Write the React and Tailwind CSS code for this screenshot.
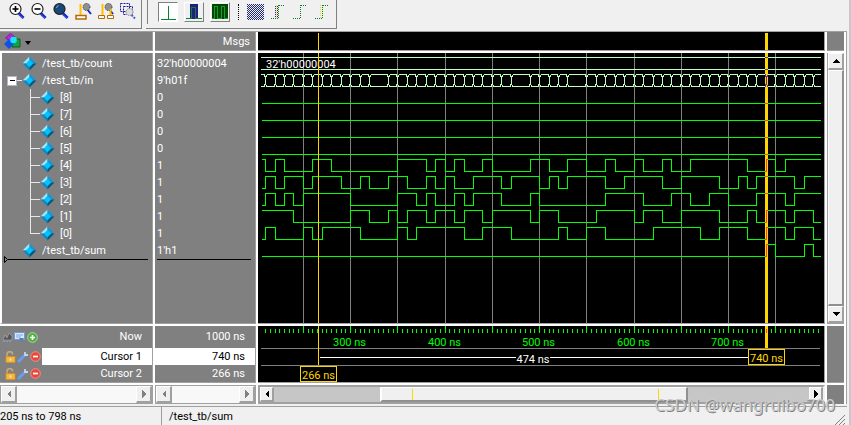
const BITS = [
  { name: '[8]', value: '0', start: 0, edges: [] },
  { name: '[7]', value: '0', start: 0, edges: [] },
  { name: '[6]', value: '0', start: 0, edges: [] },
  { name: '[5]', value: '0', start: 0, edges: [] },
  {
    name: '[4]', value: '1', start: 1,
    edges: [210, 220, 230, 260, 280, 350, 380, 390, 400, 410, 420, 440, 450, 490, 510, 530, 550, 570, 580, 600, 610, 630, 640, 660, 720, 740, 750, 760],
  },
  {
    name: '[3]', value: '1', start: 0,
    edges: [210, 220, 230, 250, 260, 290, 310, 320, 340, 360, 380, 390, 400, 410, 430, 460, 470, 500, 510, 520, 530, 570, 590, 630, 650, 690, 710, 720, 730, 770, 780],
  },
  {
    name: '[2]', value: '1', start: 0,
    edges: [210, 220, 230, 240, 250, 300, 350, 370, 380, 390, 410, 420, 430, 460, 490, 500, 570, 610, 640, 660, 680, 700, 730, 760, 770],
  },
  {
    name: '[1]', value: '1', start: 1,
    edges: [240, 300, 320, 340, 350, 360, 380, 390, 410, 420, 440, 450, 490, 500, 520, 560, 600, 610, 630, 650, 690, 720, 730, 740, 760, 770, 790],
  },
  {
    name: '[0]', value: '1', start: 0,
    edges: [210, 220, 250, 260, 270, 310, 350, 360, 370, 420, 440, 470, 520, 530, 550, 570, 620, 670, 690, 720, 740, 760, 770, 790],
  },
]
const SUM = { name: '/test_tb/sum', value: "1'h1", start: 0, edges: [740, 750, 780, 790] }

const VALUES = ["32'h00000004", "9'h01f", ...BITS.map((b) => b.value), SUM.value]
const BUS_EDGES = [...new Set(BITS.flatMap((b) => b.edges))].sort((a, b) => a - b)

const SCROLL_SPAN = 1031
const WAVE_LEFT = 4
const WAVE_RIGHT = 563

// time (ns) -> x in the wave pane
const xAt = (t) => Math.floor(92.6 + (t - 300) * 0.945) + 0.5
// y of the low level of a row
const lowAt = (row) => 16.5 + row * 17

const range = (from, to, step) => {
  const out = []
  for (let t = from; t <= to; t += step) out.push(t)
  return out
}

function bitPath({ start, edges }, row) {
  let level = start
  const y = (l) => lowAt(row) - l * 12
  let d = `M${WAVE_LEFT} ${y(level)}`
  edges.forEach((t) => {
    d += `H${xAt(t)}`
    level = 1 - level
    d += `V${y(level)}`
  })
  return d + `H${WAVE_RIGHT}`
}

function busPath(row) {
  const lo = lowAt(row)
  const hi = lo - 12
  let d = ''
  let x = WAVE_LEFT - 1
  BUS_EDGES.forEach((t) => {
    const c = xAt(t)
    // both rails stop short of the edge, then pinch together
    d += `M${x} ${hi}H${c - 1}V${hi + 2}H${c}M${x} ${lo}H${c - 1}V${lo - 2}H${c}`
    d += `M${c} ${hi + 2}V${lo - 2}M${c + 1} ${hi}V${hi + 2}M${c + 1} ${lo}V${lo - 2}`
    x = c + 1
  })
  return d + `M${x} ${hi}H${WAVE_RIGHT}M${x} ${lo}H${WAVE_RIGHT}`
}

/* ---------- icons ---------- */

function Magnifier({ fill, sign }) {
  return (
    <svg width="16" height="18" viewBox="0 0 16 18" aria-hidden="true">
      <path d="M9.500 11l5 5" stroke="#1028c8" strokeWidth="3" />
      <path d="M10 12.500l4.500 4.500" stroke="#8aa0ff" strokeWidth="1" strokeDasharray="1 1" />
      <circle cx="6.500" cy="7" r="5.500" fill={fill} stroke="#202020" strokeWidth="1.200" />
      {sign !== 'full' && <path d="M3.500 7h6" stroke="#000" strokeWidth="1.600" />}
      {sign === 'in' && <path d="M6.500 4v6" stroke="#000" strokeWidth="1.600" />}
      {sign === 'full' && <path d="M3.500 6a3 3 0 0 1 2-2.500" stroke="#7fb0e0" fill="none" />}
    </svg>
  )
}

function ZoomCursor({ pair }) {
  return (
    <svg width="18" height="18" viewBox="0 0 18 18" aria-hidden="true">
      <path d="M12 7l4 5" stroke="#1028c8" strokeWidth="2" />
      <circle cx="11.500" cy="5" r="3.500" fill="#909090" stroke="#333" strokeDasharray="1 1" />
      <path d="M5.500 2v11" stroke="#ffc000" strokeWidth="2" />
      {pair ? (
        <>
          <path d="M13.500 7v6" stroke="#ffc000" strokeWidth="2" />
          <path d="M1.500 13.500h6v3h-6zM10.500 13.500h6v3h-6z" fill="#fff" stroke="#b86800" />
        </>
      ) : (
        <path d="M1 13.500h10v3.500H1z" fill="#fff" stroke="#b86800" strokeWidth="1.500" />
      )}
    </svg>
  )
}

function ZoomArea() {
  return (
    <svg width="18" height="18" viewBox="0 0 18 18" aria-hidden="true">
      <path d="M1.500 1.500h9v8h-9zM4.500 4.500h9v8h-9z" fill="none" stroke="#1818a0" strokeDasharray="2 1" />
      <circle cx="10.500" cy="10" r="3.500" fill="#ddd" stroke="#777" strokeDasharray="1 1" />
      <path d="M12.500 13l4 4" stroke="#4060d0" strokeWidth="2" strokeDasharray="2 1" />
    </svg>
  )
}

function EdgeIcon({ accent }) {
  return (
    <svg width="16" height="18" viewBox="0 0 16 18" aria-hidden="true">
      {accent === 'block' && <path d="M5 2h4v13H5z" fill="url(#hatch)" />}
      {accent && <path d="M6.500 2v13" stroke="#f0e000" strokeDasharray="1 1" />}
      <path d="M1 15.500h7M8.500 2v13M9 2.500h6" stroke="#008028" strokeDasharray="1 1" fill="none" />
    </svg>
  )
}

function Diamond() {
  return (
    <svg width="15" height="15" viewBox="0 0 15 15" className="shrink-0" aria-hidden="true">
      <path d="M7.500 0.500L0.500 7.500h7z" fill="#a6e4f8" />
      <path d="M7.500 0.500l7 7h-7z" fill="#1496d8" />
      <path d="M0.500 7.500l7 7v-7z" fill="#1286c4" />
      <path d="M14.500 7.500l-7 7v-7z" fill="#04587e" />
      <path d="M7.500 3.800l3.700 3.700-3.700 3.700-3.700-3.700z" fill="#00c4fa" />
    </svg>
  )
}

function Branch({ last }) {
  return (
    <svg width="10" height="17" viewBox="0 0 10 17" shapeRendering="crispEdges" className="shrink-0" aria-hidden="true">
      <path d={last ? 'M0.500 0V8.500H10' : 'M0.500 0V17M0.500 8.500H10'} stroke="#e8e8e8" fill="none" />
    </svg>
  )
}

function Shapes() {
  return (
    <svg width="17" height="16" viewBox="0 0 17 16" aria-hidden="true">
      <path d="M8 6h8v8H8z" fill="#18a040" stroke="#0a6020" />
      <path d="M6.500 0.500L11 4 6 8 1.500 5z" fill="#c020e0" stroke="#701090" strokeWidth=".7" />
      <path d="M5 6l5 5-5 5-5-5z" fill="#1050e8" />
      <circle cx="9.500" cy="7" r="3.300" fill="#10e8f8" />
    </svg>
  )
}

function Lock() {
  return (
    <svg width="11" height="12" viewBox="0 0 11 12" aria-hidden="true">
      <path d="M2 6V3.500a2.800 2.800 0 0 1 5.600 0" fill="none" stroke="#c8a878" strokeWidth="1.500" />
      <path d="M1 5.500h9v6H1z" fill="#f4b840" stroke="#d89020" strokeWidth=".8" />
      <path d="M5.500 7.500v2" stroke="#fff0b0" strokeWidth="1.500" />
    </svg>
  )
}

function Wrench() {
  return (
    <svg width="12" height="12" viewBox="0 0 12 12" aria-hidden="true">
      <path d="M2 10l5-5" stroke="#6a9cf0" strokeWidth="3" strokeLinecap="round" />
      <path d="M8 1v3h3" stroke="#c8d4e8" strokeWidth="1.800" fill="none" />
    </svg>
  )
}

function Badge({ plus }) {
  return (
    <svg width="11" height="11" viewBox="0 0 11 11" aria-hidden="true">
      <circle cx="5.500" cy="5.500" r="4.800" fill={plus ? '#4caf3c' : '#e8483c'} stroke={plus ? '#a8dca0' : '#f09088'} />
      <path d={plus ? 'M3 5.500h5M5.500 3v5' : 'M3 5.500h5'} stroke="#fff" strokeWidth="1.700" />
    </svg>
  )
}

function NowIcons() {
  return (
    <svg width="23" height="12" viewBox="0 0 23 12" aria-hidden="true">
      <path d="M1 9l2-5 2 3 2-5 3 3v4z" fill="#555" stroke="#aaa" strokeWidth=".7" />
      <path d="M1 10.500h9" stroke="#70a0e0" strokeDasharray="2 1" />
      <path d="M12.500 1.500h10v7h-10z" fill="#dce8fa" stroke="#6f98d8" />
      <path d="M14 4h7M14 6h5" stroke="#7aa0d8" />
      <path d="M17 7h5l-2.500 4z" fill="#4f7fd0" />
    </svg>
  )
}

const ARROWS = {
  left: 'M7 1v8L3 5z',
  right: 'M3 1v8l4-4z',
  up: 'M1 7h8L5 3z',
  down: 'M1 3h8L5 7z',
}

function ArrowButton({ dir, label, muted, className }) {
  return (
    <button
      type="button"
      aria-label={label}
      className={`flex shrink-0 items-center justify-center border-t border-l border-r-2 border-b-2 border-t-white border-l-white border-r-[#a0a0a0] border-b-[#a0a0a0] bg-[#f0f0f0] ${className}`}
    >
      <svg width="10" height="10" viewBox="0 0 10 10" shapeRendering="crispEdges" aria-hidden="true">
        <path d={ARROWS[dir]} fill={muted ? '#808080' : '#000'} />
      </svg>
    </button>
  )
}

/* ---------- toolbar ---------- */

function Toolbar() {
  return (
    <header className="flex h-[29px] shrink-0 gap-1">
      <div className="flex w-[142px] items-center border-r border-b border-[#808080] pb-1.5 pl-[9px]">
        <button type="button" aria-label="Zoom in" className="w-[22px]"><Magnifier fill="#fff" sign="in" /></button>
        <button type="button" aria-label="Zoom out" className="w-[22px]"><Magnifier fill="#fff" sign="out" /></button>
        <button type="button" aria-label="Zoom full" className="w-[22px]"><Magnifier fill="#184878" sign="full" /></button>
        <button type="button" aria-label="Zoom on cursor" className="w-[22px]"><ZoomCursor /></button>
        <button type="button" aria-label="Zoom between cursors" className="w-[22px]"><ZoomCursor pair /></button>
        <button type="button" aria-label="Zoom area" className="w-[22px]"><ZoomArea /></button>
      </div>
      <div className="flex w-[191px] items-center border-r border-b border-[#808080] pb-1 pl-px">
        <span className="mr-2.5 h-full w-px bg-[#808080]" />
        <button type="button" aria-label="Cursor mode" className="mr-1.5 size-5 border border-t-[#808080] border-l-[#808080] border-white bg-white">
          <svg width="18" height="18" viewBox="0 0 18 18" shapeRendering="crispEdges"><path d="M2 16.500h15M9.500 3v13" stroke="#108030" /></svg>
        </button>
        <button type="button" aria-label="Edit mode" className="mr-1.5 size-5 border border-white border-r-[#808080] border-b-[#808080]">
          <svg width="18" height="18" viewBox="0 0 18 18" shapeRendering="crispEdges"><path d="M5 1h8v15H5z" fill="#202080" /><path d="M1 15.500h5.500V4.500h4v11H17" stroke="#108030" fill="none" /></svg>
        </button>
        <button type="button" aria-label="Stimulus mode" className="mr-2 size-5 border border-white border-r-[#808080] border-b-[#808080]">
          <svg width="18" height="18" viewBox="0 0 18 18" shapeRendering="crispEdges"><path d="M1 1h16v15H1z" fill="#004800" /><path d="M1 15.500h2.500v-12h3v12h4v-12h3v12H17" stroke="#10a030" fill="none" /></svg>
        </button>
        <span className="mr-2 h-4 border-l border-dotted border-black" />
        <button type="button" aria-label="Expand" className="mr-1.5">
          <svg width="17" height="16" viewBox="0 0 17 16" shapeRendering="crispEdges">
            <defs>
              <pattern id="hatch" width="2" height="2" patternUnits="userSpaceOnUse">
                <path d="M0 0h1v1H0zM1 1h1v1H1z" fill="#20287c" />
              </pattern>
            </defs>
            <path d="M0 0h17v16H0z" fill="url(#hatch)" />
          </svg>
        </button>
        <button type="button" aria-label="Edge block" className="mr-1.5"><EdgeIcon accent="block" /></button>
        <button type="button" aria-label="Edge" className="mr-1.5"><EdgeIcon /></button>
        <button type="button" aria-label="Edge line"><EdgeIcon accent="line" /></button>
      </div>
    </header>
  )
}

/* ---------- panes ---------- */

const HEAD = 'h-[19px] shrink-0 border-b border-[#a0a0a0]'
const FOOT = 'h-[57px] shrink-0 border-b border-[#a0a0a0]'

function HScroll({ name }) {
  return (
    <div className="flex h-[19px] shrink-0 border border-[#a0a0a0] bg-[#f8f8f8]">
      <ArrowButton dir="left" label={`Scroll ${name} left`} muted className="w-4" />
      <div className="flex-1" />
      <ArrowButton dir="right" label={`Scroll ${name} right`} muted className="w-4" />
    </div>
  )
}

function CursorRow({ label, active }) {
  return (
    <div className="flex h-[17px] items-center">
      <div className="flex w-[42px] items-center gap-px pl-[5px]">
        <Lock />
        <Wrench />
        <Badge />
      </div>
      <span className={`flex h-full flex-1 items-center justify-end pr-2.5 ${active ? 'bg-white text-black' : ''}`}>{label}</span>
    </div>
  )
}

function NamesPane() {
  return (
    <section className="flex w-[153px] shrink-0 flex-col gap-0.5 text-white">
      <div className={`${HEAD} flex items-center gap-1 border-r bg-[#808080] pl-1`}>
        <Shapes />
        <svg width="6" height="4" viewBox="0 0 6 4" className="mt-1" aria-hidden="true"><path d="M0 0h6L3 4z" fill="#000" /></svg>
      </div>
      <div className="flex-1 border-r border-b border-l-2 border-[#a0a0a0] border-l-white bg-[#808080] pt-0.5">
        <ul>
          <li className="flex h-[17px] items-center pl-5">
            <Diamond />
            <span className="pl-[5px]">/test_tb/count</span>
          </li>
          <li>
            <div className="flex h-[17px] items-center pl-[5px]">
              <button type="button" aria-label="Collapse /test_tb/in" className="size-2.5 border border-[#b0b8c8] bg-white">
                <svg width="8" height="8" viewBox="0 0 8 8" shapeRendering="crispEdges" className="block"><path d="M2 3.500h5" stroke="#000" /></svg>
              </button>
              <span className="h-px w-[5px] bg-[#e8e8e8]" />
              <Diamond />
              <span className="pl-[5px]">/test_tb/in</span>
            </div>
            <ul>
              {BITS.map((bit, i) => (
                <li key={bit.name} className="flex h-[17px] items-center pl-7">
                  <Branch last={i === BITS.length - 1} />
                  <Diamond />
                  <span className="pl-[5px]">{bit.name}</span>
                </li>
              ))}
            </ul>
          </li>
          <li className="flex h-[17px] items-center pl-5">
            <Diamond />
            <span className="pl-[5px]">{SUM.name}</span>
          </li>
        </ul>
        {/* insertion bar */}
        <div className="flex h-px items-center pr-1 pl-0.5">
          <svg width="4" height="7" viewBox="0 0 4 7" aria-hidden="true"><path d="M.5 .5v6l3-3z" fill="none" stroke="#000" /></svg>
          <span className="h-px flex-1 bg-black" />
        </div>
      </div>
      <div className={`${FOOT} border-r bg-[#808080]`}>
        <div className="flex h-[22px] items-center gap-0.5 pl-0.5">
          <NowIcons />
          <Badge plus />
          <span className="flex-1 pr-2.5 text-right">Now</span>
        </div>
        <CursorRow label="Cursor 1" active />
        <CursorRow label="Cursor 2" />
      </div>
      <HScroll name="names" />
    </section>
  )
}

function ValuesPane() {
  return (
    <section className="flex w-[101px] shrink-0 flex-col gap-0.5 text-white">
      <div className={`${HEAD} flex items-center justify-end border-r bg-[#808080] pt-0.5 pr-[5px]`}>Msgs</div>
      <div className="flex-1 border-r border-b border-[#a0a0a0] bg-[#808080] pt-0.5">
        <ul>
          {VALUES.map((value, i) => (
            <li key={i} className="flex h-[17px] items-center pl-0.5">{value}</li>
          ))}
        </ul>
        <div className="mr-1 ml-0.5 h-px bg-black" />
      </div>
      <div className={`${FOOT} border-r bg-[#808080] text-right`}>
        <div className="flex h-[22px] items-center justify-end pr-2.5">1000 ns</div>
        <div className="flex h-[17px] items-center justify-end bg-white pr-2.5 text-black">740 ns</div>
        <div className="flex h-[17px] items-center justify-end pr-2.5">266 ns</div>
      </div>
      <HScroll name="values" />
    </section>
  )
}

function Traces({ bus, bit }) {
  return (
    <g fill="none">
      <path d={`M3 4.500H${WAVE_RIGHT}M3 16.500H${WAVE_RIGHT}`} stroke={bus} />
      <path d={busPath(1)} stroke={bus} />
      {BITS.map((b, i) => (
        <path key={b.name} d={bitPath(b, i + 2)} stroke={bit} />
      ))}
      <path d={bitPath(SUM, 11)} stroke={bit} />
    </g>
  )
}

function Waves() {
  return (
    <svg className="block h-full w-full" shapeRendering="crispEdges" role="img" aria-label="Waveforms">
      <defs>
        <clipPath id="under-cursor">
          <rect x={xAt(740) - 1.5} y="0" width="3" height="100%" />
        </clipPath>
      </defs>
      {range(250, 750, 50).map((t) => (
        <line key={t} x1={xAt(t)} x2={xAt(t)} y1="0" y2="100%" stroke="#808080" />
      ))}
      <Traces bus="#c0ffc0" bit="#00ff00" />
      <text x="8" y="15" fill="#fff">32&apos;h00000004</text>
      <line x1={xAt(266)} x2={xAt(266)} y1="0" y2="100%" stroke="#ffd700" />
      <line x1={xAt(740)} x2={xAt(740)} y1="0" y2="100%" stroke="#ffd700" strokeWidth="3" />
      <g clipPath="url(#under-cursor)">
        <Traces bus="#6030a0" bit="#ff4020" />
      </g>
    </svg>
  )
}

function Ruler() {
  const a = xAt(266)
  const b = xAt(740)
  return (
    <svg className="block h-full w-full" shapeRendering="crispEdges" role="img" aria-label="Time ruler and cursors">
      {range(210, 795, 5).map((t) => (
        <line key={t} x1={xAt(t)} x2={xAt(t)} y1={t % 50 === 0 ? 0 : 3} y2="7" stroke="#00ff00" />
      ))}
      <path d={`M3 22.500H${WAVE_RIGHT - 1}M3 39.500H${WAVE_RIGHT - 1}`} stroke="#808080" />
      {range(300, 700, 100).map((t) => (
        <text key={t} x={xAt(t) - 1} y="20" textAnchor="middle" fill="#00ff00">{t} ns</text>
      ))}
      <path d={`M${a} 0V39`} stroke="#ffd700" />
      <path d={`M${b} 0V22`} stroke="#ffd700" strokeWidth="3" />
      <path d={`M${b} 3V7`} stroke="#ff4020" />
      <path d={`M${a + 1} 31.500H258M292 31.500H490`} stroke="#fff" />
      <text x="275" y="37" textAnchor="middle" fill="#fff">474 ns</text>
      <rect x={b - 18} y="23.500" width="36" height="15" fill="#000" stroke="#ffd700" />
      <text x={b} y="36" textAnchor="middle" fill="#ffd700">740 ns</text>
      <rect x={a - 18} y="40.500" width="36" height="15" fill="#000" stroke="#ffd700" />
      <text x={a} y="53" textAnchor="middle" fill="#ffd700">266 ns</text>
    </svg>
  )
}

function WavePane() {
  const pct = (t) => `${(t / SCROLL_SPAN) * 100}%`
  return (
    <section className="flex min-w-0 flex-1 flex-col gap-0.5">
      <div className={`${HEAD} overflow-hidden border-r bg-black`}>
        <svg className="block h-full w-full" shapeRendering="crispEdges" aria-hidden="true">
          <path d={`M${xAt(266)} 1V18`} stroke="#ffd700" />
          <path d={`M${xAt(740)} 1V18`} stroke="#ffd700" strokeWidth="3" />
        </svg>
      </div>
      <div className="min-h-0 flex-1 overflow-hidden border-r border-b border-[#a0a0a0] bg-black">
        <Waves />
      </div>
      <div className={`${FOOT} overflow-hidden border-r bg-black`}>
        <Ruler />
      </div>
      <div className="flex h-[19px] shrink-0 border-2 border-[#a0a0a0] border-r-[#f0f0f0] bg-[#c6c6c6]">
        <ArrowButton dir="left" label="Scroll waves left" className="w-3.5" />
        <div className="relative flex-1">
          <div
            className="absolute inset-y-0 border-t border-r-2 border-b-2 border-l-2 border-t-white border-r-[#909090] border-b-[#909090] border-l-white bg-[#f0f0f0]"
            style={{ left: pct(205), width: pct(593) }}
          />
          <span className="absolute top-0.5 bottom-0.5 w-px bg-[#ffd700]" style={{ left: pct(266) }} />
          <span className="absolute top-0.5 bottom-0.5 w-px bg-[#ffd700]" style={{ left: pct(740) }} />
        </div>
        <ArrowButton dir="right" label="Scroll waves right" className="w-3.5" />
      </div>
    </section>
  )
}

function VScroll() {
  return (
    <div className="flex w-[17px] shrink-0 flex-col gap-0.5">
      <div className={`${HEAD} bg-[#808080]`} />
      <div className="flex flex-1 flex-col border-b border-l border-[#a0a0a0] bg-[#f0f0f0]">
        <ArrowButton dir="up" label="Scroll up" className="h-[17px]" />
        <div className="flex-1 border-t border-r-2 border-b-2 border-l border-t-white border-r-[#909090] border-b-[#909090] border-l-white" />
        <ArrowButton dir="down" label="Scroll down" className="h-[17px]" />
      </div>
      <div className={`${FOOT} bg-[#808080]`} />
      <div className="h-[19px] shrink-0 bg-[#808080]" />
    </div>
  )
}

function StatusBar() {
  return (
    <footer className="flex h-[19px] shrink-0 items-stretch border-t border-[#a0a0a0] leading-[19px]">
      <span className="w-[162px] border-r border-[#a0a0a0]">205 ns to 798 ns</span>
      <span className="flex-1 pl-[7px]">/test_tb/sum</span>
      <svg width="10" height="10" viewBox="0 0 10 10" className="mr-0.5 self-end" aria-hidden="true">
        <path d="M0 10L10 0M4 10l6-6M8 10l2-2" stroke="#808080" />
      </svg>
    </footer>
  )
}

export default function App() {
  return (
    <div className="relative flex h-screen min-h-[425px] w-full flex-col overflow-hidden bg-[#f0f0f0] font-[Roboto,'Noto_Sans',sans-serif] text-[11px] leading-4 text-black [&_svg]:shrink-0">
      <div className="flex min-h-0 flex-1 flex-col border-r-2 border-[#c8c8c8] pr-0.5">
        <Toolbar />
        <main className="mt-0.5 flex min-h-0 flex-1 gap-0.5 border-t border-r border-[#a0a0a0] bg-white pr-0.5">
          <NamesPane />
          <ValuesPane />
          <WavePane />
          <VScroll />
        </main>
        <div className="h-0.5 shrink-0" />
        <StatusBar />
      </div>
      <span className="pointer-events-none absolute right-4 bottom-2 font-['Noto_Sans',sans-serif] text-[17px] leading-6 text-[#cccccc] [text-shadow:1px_1px_0_#808080]">
        CSDN @wangruibo700
      </span>
    </div>
  )
}
